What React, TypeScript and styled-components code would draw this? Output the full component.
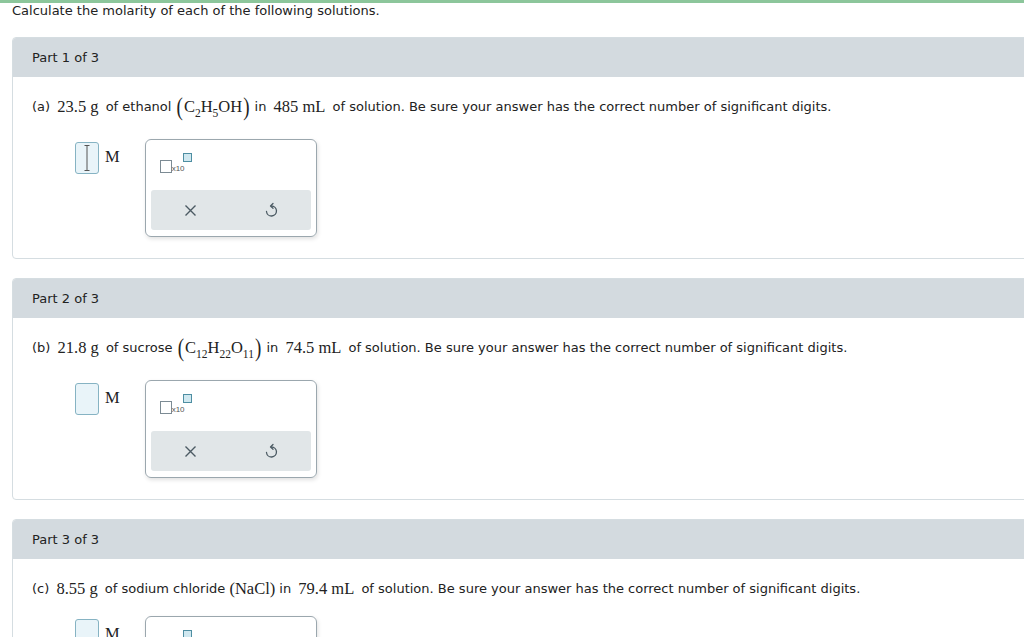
import React from "react";
import styled, { createGlobalStyle } from "styled-components";

const GlobalStyle = createGlobalStyle`
  html, body { margin: 0; padding: 0; background: #fff; overflow: hidden; }
  body { font-family: "DejaVu Sans", Verdana, sans-serif; font-size: 13px; color: #222; }
`;

const TopBar = styled.div`
  height: 3px;
  background: #8cc69b;
`;

const Page = styled.div`
  padding-left: 12px;
`;

const Title = styled.div`
  line-height: 16px;
  margin-bottom: 18px;
`;

const Card = styled.section`
  width: 1040px;
  border: 1px solid #d5dde1;
  border-radius: 4px;
  margin-bottom: 19px;
  overflow: hidden;
`;

const Header = styled.div`
  height: 39px;
  background: #d3dadf;
  display: flex;
  align-items: center;
  padding-left: 19px;
`;

const Body = styled.div<{ $short?: boolean }>`
  padding: ${(p) => (p.$short ? "21px" : "19px")} 20px 21px 19px;
`;

const Question = styled.div<{ $short?: boolean }>`
  line-height: 20px;
  height: ${(p) => (p.$short ? "18px" : "22px")};
  white-space: nowrap;
  display: flex;
  align-items: center;
`;

const Text = styled.span`
  white-space: pre;
`;

const M = styled.span<{ $tight?: boolean }>`
  font-family: "Liberation Serif", "Times New Roman", serif;
  font-size: 16.5px;
  padding: ${(p) => (p.$tight ? "0" : "0 3px")};
  white-space: pre;
`;

const BigParen = styled.span`
  display: inline-block;
  font-family: "Liberation Serif", serif;
  font-size: 19px;
  line-height: 20px;
  transform: scaleY(1.3);
  margin: 0 1px;
`;

const Sub = styled.sub`
  font-size: 11.5px;
  vertical-align: -5px;
  line-height: 0;
`;

const AnswerRow = styled.div<{ $short?: boolean }>`
  display: flex;
  align-items: flex-start;
  padding-left: 43px;
  margin-top: ${(p) => (p.$short ? "18px" : "21px")};
`;

const InputBox = styled.div`
  box-sizing: border-box;
  width: 24px;
  height: 32px;
  margin-top: 3px;
  border: 1.5px solid #86b3c3;
  border-radius: 3px;
  background: #e9f4f9;
  display: flex;
  align-items: center;
  justify-content: center;
`;

const Unit = styled.span`
  font-family: "Liberation Serif", "Times New Roman", serif;
  font-size: 16.5px;
  margin-left: 6px;
  margin-top: 10px;
  line-height: 16px;
`;

const Panel = styled.div`
  box-sizing: border-box;
  width: 172px;
  height: 98px;
  margin-left: 25px;
  border: 1px solid #9ba7ae;
  border-radius: 6px;
  padding: 6px 5px 6px 5px;
  box-shadow: 1px 2px 4px rgba(0, 0, 0, 0.12);
  display: flex;
  flex-direction: column;
`;

const Templates = styled.div`
  height: 44px;
  position: relative;
`;

const TplBox = styled.span`
  position: absolute;
  left: 9px;
  top: 14px;
  box-sizing: border-box;
  width: 12px;
  height: 13px;
  border: 1.5px solid #7c8b94;
`;

const TplX = styled.span`
  position: absolute;
  left: 21px;
  top: 18px;
  font-family: "Liberation Sans", Arial, sans-serif;
  font-size: 8px;
  color: #555;
`;

const TplSup = styled.span`
  position: absolute;
  left: 32px;
  top: 7px;
  box-sizing: border-box;
  width: 9px;
  height: 9px;
  border: 1.2px solid #4e8ea2;
  background: #d0e8f0;
`;

const ButtonBar = styled.div`
  height: 40px;
  background: #e1e6e8;
  border-radius: 3px;
  display: flex;
  align-items: center;
`;

const IconButton = styled.button<{ $left: number }>`
  border: 0;
  background: transparent;
  padding: 0;
  margin-left: ${(p) => p.$left}px;
  width: 16px;
  height: 16px;
  display: flex;
  align-items: center;
  justify-content: center;
`;

const Cursor = () => (
  <svg width="8" height="28" viewBox="0 0 8 28">
    <path d="M1.5 1.5 H6.5 M4 1.5 V26.5 M1.5 26.5 H6.5" stroke="#555" strokeWidth="1" fill="none" />
  </svg>
);

const XIcon = () => (
  <svg width="13" height="13" viewBox="0 0 13 13">
    <path d="M1.5 1.5 L11.5 11.5 M11.5 1.5 L1.5 11.5" stroke="#4b5a63" strokeWidth="1.4" fill="none" />
  </svg>
);

const UndoIcon = () => (
  <svg width="14" height="16" viewBox="0 0 14 16">
    <path d="M7.5 4 A5 5 0 1 1 2.5 9.5" stroke="#4b5a63" strokeWidth="1.3" fill="none" strokeLinecap="round" />
    <path d="M9 1.5 L6.5 4 L9 6.2" stroke="#4b5a63" strokeWidth="1.3" fill="none" strokeLinecap="round" strokeLinejoin="round" />
  </svg>
);

type Part = {
  n: number;
  question: React.ReactNode;
  cursor?: boolean;
  short?: boolean;
};

const parts: Part[] = [
  {
    n: 1,
    cursor: true,
    question: (
      <>
        <Text>(a) </Text>
        <M>23.5 g</M>
        <Text> of ethanol </Text>
        <BigParen>(</BigParen>
        <M $tight>
          C<Sub>2</Sub>H<Sub>5</Sub>OH
        </M>
        <BigParen>)</BigParen>
        <Text> in </Text>
        <M>485 mL</M>
        <Text> of solution. Be sure your answer has the correct number of significant digits.</Text>
      </>
    ),
  },
  {
    n: 2,
    question: (
      <>
        <Text>(b) </Text>
        <M>21.8 g</M>
        <Text> of sucrose </Text>
        <BigParen>(</BigParen>
        <M $tight>
          C<Sub>12</Sub>H<Sub>22</Sub>O<Sub>11</Sub>
        </M>
        <BigParen>)</BigParen>
        <Text> in </Text>
        <M>74.5 mL</M>
        <Text> of solution. Be sure your answer has the correct number of significant digits.</Text>
      </>
    ),
  },
  {
    n: 3,
    short: true,
    question: (
      <>
        <Text>(c) </Text>
        <M>8.55 g</M>
        <Text> of sodium chloride </Text>
        <M $tight>(NaCl)</M>
        <Text> in </Text>
        <M>79.4 mL</M>
        <Text> of solution. Be sure your answer has the correct number of significant digits.</Text>
      </>
    ),
  },
];

export default function App() {
  return (
    <>
      <GlobalStyle />
      <TopBar />
      <Page>
        <Title>Calculate the molarity of each of the following solutions.</Title>
        {parts.map((p) => (
          <Card key={p.n}>
            <Header>Part {p.n} of 3</Header>
            <Body $short={p.short}>
              <Question $short={p.short}>{p.question}</Question>
              <AnswerRow $short={p.short}>
                <InputBox>{p.cursor && <Cursor />}</InputBox>
                <Unit>M</Unit>
                <Panel>
                  <Templates>
                    <TplBox />
                    <TplX>x10</TplX>
                    <TplSup />
                  </Templates>
                  <ButtonBar>
                    <IconButton $left={32} aria-label="clear">
                      <XIcon />
                    </IconButton>
                    <IconButton $left={64} aria-label="undo">
                      <UndoIcon />
                    </IconButton>
                  </ButtonBar>
                </Panel>
              </AnswerRow>
            </Body>
          </Card>
        ))}
      </Page>
    </>
  );
}
